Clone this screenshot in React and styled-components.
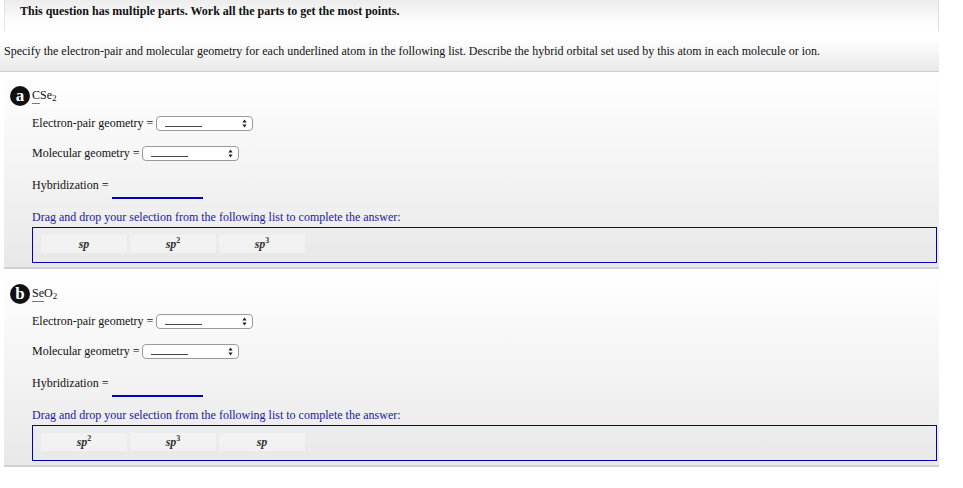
import React from 'react';
import styled, { createGlobalStyle } from 'styled-components';

const GlobalStyle = createGlobalStyle`
  body {
    margin: 0;
    background: #ffffff;
    font-family: "Liberation Serif", "Times New Roman", serif;
    font-size: 12px;
    color: #111;
  }
`

const Page = styled.div`
  width: 939px;
  display: flex;
  flex-direction: column;
`
const Header = styled.div`
  margin-left: 4px;
  height: 31px;
  box-sizing: border-box;
  padding: 3px 0 0 15px;
  border-left: 1px solid #e4e4e4;
  border-right: 1px solid #dedede;
  background: linear-gradient(#ececec, #fbfbfb 60%, #ffffff);
  font-weight: bold;
  line-height: 16px;
`
const Intro = styled.div`
  height: 41px;
  box-sizing: border-box;
  padding: 12px 0 0 4px;
  line-height: 16px;
  border-bottom: 1px solid #cfcfcf;
  background: linear-gradient(#ffffff 20%, #e9e9e9);
`
const Part = styled.div`
  margin-left: 4px;
  margin-top: ${p => p.$gap || 0}px;
  padding: 13px 0 4px 6px;
  border-bottom: 2px solid #d0d0d0;
  background: linear-gradient(#ffffff, #f4f4f4 50%, #e8e8e8);
  display: flex;
  flex-direction: column;
`
const TitleRow = styled.div`
  height: 22px;
  display: flex;
  align-items: center;
  gap: 2px;
`
const Badge = styled.span`
  width: 20px;
  height: 20px;
  border-radius: 50%;
  background: #111;
  color: #fff;
  font-weight: bold;
  font-size: 17px;
  line-height: 19px;
  text-align: center;
`
const Formula = styled.span`
  font-size: 12px;
`
const Atom = styled.span`
  display: inline-block;
  border-bottom: 1px solid #777;
  line-height: 12px;
  padding-bottom: 2px;
`
const Sub = styled.sub`
  font-size: 9px;
  vertical-align: -2px;
`
const Fields = styled.div`
  padding-left: 22px;
  display: flex;
  flex-direction: column;
`
const Row = styled.div`
  margin-top: ${p => p.$top}px;
  display: flex;
  align-items: ${p => (p.$start ? 'flex-start' : 'center')};
  line-height: 16px;
  min-height: 16px;
`
const Select = styled.div`
  margin-left: 3px;
  width: ${p => p.$w}px;
  height: 15px;
  box-sizing: border-box;
  border: 1px solid #9a9a9a;
  border-radius: 4px;
  background: #fff;
  display: flex;
  align-items: center;
  justify-content: space-between;
  padding: 0 5px 0 8px;
`
const Dashes = styled.span`
  width: 37px;
  height: 6px;
  border-bottom: 1px solid #444;
`
const Blank = styled.span`
  margin-left: 4px;
  width: 91px;
  height: 20px;
  border-bottom: 2px solid #0000bb;
`
const Instruction = styled.div`
  margin-top: 10px;
  line-height: 16px;
  color: #1a1aa0;
`
const DropBox = styled.div`
  margin-top: 2px;
  width: 905px;
  height: 36px;
  box-sizing: border-box;
  border: 1px solid #0000b0;
  padding: 7px 0 0 8px;
  display: flex;
  gap: 3px;
`
const Chip = styled.div`
  width: 86px;
  height: 18px;
  background: rgba(255, 255, 255, 0.35);
  display: flex;
  align-items: center;
  justify-content: center;
  color: #333;
`
const MathText = styled.span`
  font-style: italic;
  font-weight: bold;
  font-size: 12px;
  line-height: 14px;
`
const Sup = styled.sup`
  font-size: 8px;
  vertical-align: 5px;
  font-style: normal;
  line-height: 0;
`

const Arrows = () => (
  <svg width="5" height="9" viewBox="0 0 5 9">
    <path d="M2.5 0.5 L4.6 3.6 H0.4 Z" fill="#222" />
    <path d="M2.5 8.5 L4.6 5.4 H0.4 Z" fill="#222" />
  </svg>
)

const Dropdown = ({ w }) => (
  <Select $w={w}>
    <Dashes />
    <Arrows />
  </Select>
)

const Orbital = ({ n }) => (
  <Chip>
    <MathText>
      sp{n ? <Sup>{n}</Sup> : null}
    </MathText>
  </Chip>
)

const QuestionPart = ({ letter, atom, rest, sub, order, gap }) => (
  <Part $gap={gap}>
    <TitleRow>
      <Badge>{letter}</Badge>
      <Formula>
        <Atom>{atom}</Atom>{rest}<Sub>{sub}</Sub>
      </Formula>
    </TitleRow>
    <Fields>
      <Row $top={8}>
        Electron-pair geometry = <Dropdown w={97} />
      </Row>
      <Row $top={14}>
        Molecular geometry = <Dropdown w={97} />
      </Row>
      <Row $top={16} $start>
        Hybridization = <Blank />
      </Row>
      <Instruction>Drag and drop your selection from the following list to complete the answer:</Instruction>
      <DropBox>
        {order.map((n, i) => (
          <Orbital key={i} n={n} />
        ))}
      </DropBox>
    </Fields>
  </Part>
)

export default function App() {
  return (
    <Page>
      <GlobalStyle />
      <Header>This question has multiple parts. Work all the parts to get the most points.</Header>
      <Intro>
        Specify the electron-pair and molecular geometry for each underlined atom in the following list. Describe the hybrid orbital set used by this atom in each molecule or ion.
      </Intro>
      <QuestionPart letter="a" atom="C" rest="Se" sub="2" order={[null, 2, 3]} />
      <QuestionPart letter="b" atom="Se" rest="O" sub="2" order={[2, 3, null]} gap={1} />
    </Page>
  );
}
